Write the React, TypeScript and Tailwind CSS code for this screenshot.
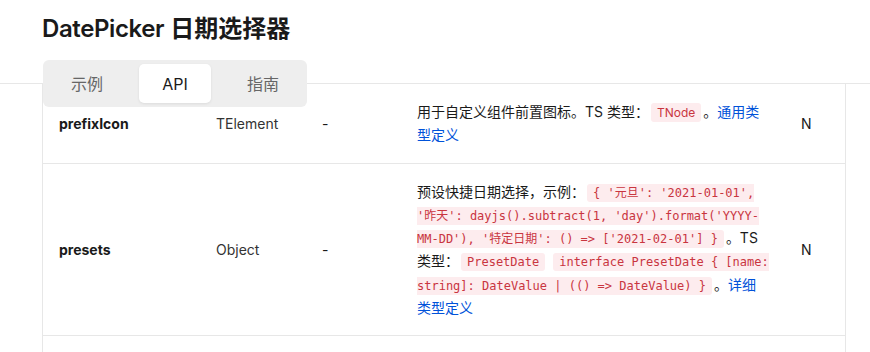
import React from "react";

const sans = "font-['Inter','Noto_Sans_CJK_SC',sans-serif]";

const Code = ({ children, mono = true }: { children: React.ReactNode; mono?: boolean }) => (
  <code
    className={`mx-[2px] rounded-[3px] bg-[#fdecee] px-[6px] py-[2px] text-[12px] leading-[14px] text-[#c9353f] ${
      mono ? "font-['DejaVu_Sans_Mono','Noto_Sans_CJK_SC',monospace]" : sans
    }`}
  >
    {children}
  </code>
);

const Link = ({ children }: { children: React.ReactNode }) => (
  <a className="cursor-pointer text-[#0052d9]">{children}</a>
);

type Row = {
  name: string;
  type: string;
  def: string;
  desc: React.ReactNode;
  required: string;
};

const rows: Row[] = [
  {
    name: "prefixIcon",
    type: "TElement",
    def: "-",
    desc: (
      <>
        用于自定义组件前置图标。TS 类型：<Code mono={false}>TNode</Code>。<Link>通用类型定义</Link>
      </>
    ),
    required: "N",
  },
  {
    name: "presets",
    type: "Object",
    def: "-",
    desc: (
      <>
        预设快捷日期选择，示例：
        <Code>
          {"{ '元旦': '2021-01-01', '昨天': dayjs().subtract(1, 'day').format('YYYY-MM-DD'), '特定日期': () => ['2021-02-01'] }"}
        </Code>
        。TS 类型：<Code>PresetDate</Code> <Code>{"interface PresetDate { [name: string]: DateValue | (() => DateValue) }"}</Code>。
        <Link>详细类型定义</Link>
      </>
    ),
    required: "N",
  },
  {
    name: "presetsPlacement",
    type: "String",
    def: "bottom",
    desc: <>预设面板展示区域（包含确定按钮）。可选项：left/top/right/bottom</>,
    required: "N",
  },
];

export default function App() {
  return (
    <div className={`relative h-screen w-full overflow-hidden bg-white text-[14px] text-[#1a1a1a] ${sans}`}>
      <header className="h-[84px] border-b border-[#e7e7e7] pl-[42px] pt-[13px]">
        <h1 className="text-[24px] font-semibold leading-[32px] text-[#1a1a1a]">
          <span className="tracking-[-0.4px]">DatePicker</span> 日期选择器
        </h1>
      </header>

      <div className="ml-[42px] w-[804px] border-x border-[#e7e7e7]">
        <table className="w-full table-fixed border-collapse">
          <colgroup>
            <col className="w-[157px]" />
            <col className="w-[106px]" />
            <col className="w-[95px]" />
            <col className="w-[384px]" />
            <col className="w-[60px]" />
          </colgroup>
          <tbody>
            {rows.map((r) => (
              <tr key={r.name} className="border-b border-[#e7e7e7] align-middle leading-[23.3px]">
                <td className="px-4 py-4 font-bold">{r.name}</td>
                <td className="px-4 py-4 text-[#333]">{r.type}</td>
                <td className="px-4 py-4">{r.def}</td>
                <td className="py-4 pl-4 pr-[16px]">{r.desc}</td>
                <td className="px-4 py-4">{r.required}</td>
              </tr>
            ))}
          </tbody>
        </table>
      </div>

      <div className="absolute left-[43px] top-[60px] flex h-[47px] w-[264px] items-center gap-4 rounded-md bg-[#eeeeee] px-2">
        {["示例", "API", "指南"].map((t) => (
          <button
            key={t}
            className={`h-[39px] w-[72px] rounded-[5px] text-[16px] ${
              t === "API" ? "bg-white text-[#1a1a1a] shadow-[0_1px_3px_rgba(0,0,0,0.08)]" : "text-[#666]"
            }`}
          >
            {t}
          </button>
        ))}
      </div>
    </div>
  );
}
